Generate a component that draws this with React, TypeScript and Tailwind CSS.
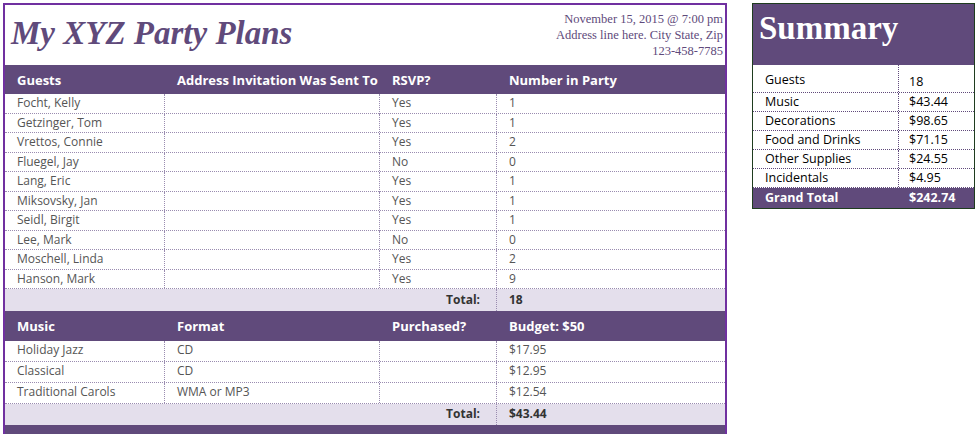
const guests = [
  ["Focht, Kelly", "Yes", "1"],
  ["Getzinger, Tom", "Yes", "1"],
  ["Vrettos, Connie", "Yes", "2"],
  ["Fluegel, Jay", "No", "0"],
  ["Lang, Eric", "Yes", "1"],
  ["Miksovsky, Jan", "Yes", "1"],
  ["Seidl, Birgit", "Yes", "1"],
  ["Lee, Mark", "No", "0"],
  ["Moschell, Linda", "Yes", "2"],
  ["Hanson, Mark", "Yes", "9"],
];

const music = [
  ["Holiday Jazz", "CD", "$17.95"],
  ["Classical", "CD", "$12.95"],
  ["Traditional Carols", "WMA or MP3", "$12.54"],
];

const summary = [
  ["Music", "$43.44"],
  ["Decorations", "$98.65"],
  ["Food and Drinks", "$71.15"],
  ["Other Supplies", "$24.55"],
  ["Incidentals", "$4.95"],
];

const cols = "grid grid-cols-[160px_215px_117px_1fr]";
const cell = "pl-3 border-r border-dotted border-[#9a8cb0]";

const Head = ({ items, h }: { items: string[]; h: string }) => (
  <div className={`${cols} ${h} bg-[#604a7b] text-white font-bold text-[13px] pt-1.5`}>
    {items.map((t, i) => (
      <div key={i} className="pl-3">{t}</div>
    ))}
  </div>
);

const Row = ({ a, b, c, d, h }: { a: string; b: string; c: string; d: string; h: string }) => (
  <div className={`${cols} ${h} border-b border-dotted border-[#9a8cb0] text-[12px] text-[#555] items-end`}>
    <div className={`${cell} h-full flex items-end pb-0.5`}>{a}</div>
    <div className={`${cell} h-full flex items-end pb-0.5`}>{b}</div>
    <div className={`${cell} h-full flex items-end pb-0.5`}>{c}</div>
    <div className="pl-3 h-full flex items-end pb-0.5">{d}</div>
  </div>
);

const Total = ({ v, h }: { v: string; h: string }) => (
  <div className={`${cols} ${h} bg-[#e4dfec] text-[12px] text-[#333] font-bold`}>
    <div className="col-span-3 text-right pr-4 border-r border-dotted border-[#9a8cb0] flex items-end justify-end pb-0.5">Total:</div>
    <div className="pl-3 flex items-end pb-0.5">{v}</div>
  </div>
);

export default function App() {
  return (
    <div className="w-[977px] h-[434px] bg-white flex gap-[25px] pl-[3px] pt-[3px] overflow-hidden" style={{ fontFamily: '"Open Sans", "Liberation Sans", sans-serif' }}>
      <div className="w-[724px] h-[440px] border-x-2 border-t-2 border-[#7030a0] flex flex-col">
        <div className="h-[60px] flex justify-between">
          <h1 className="pl-1.5 pt-3 text-[33px] leading-none italic font-bold text-[#604a7b]" style={{ fontFamily: '"Liberation Serif", serif' }}>
            My XYZ Party Plans
          </h1>
          <div className="text-right text-[12.5px] leading-[16px] text-[#604a7b] pr-0.5 pt-1.5" style={{ fontFamily: '"Liberation Serif", serif' }}>
            <div>November 15, 2015 @ 7:00 pm</div>
            <div>Address line here. City State, Zip</div>
            <div>123-458-7785</div>
          </div>
        </div>
        <Head items={["Guests", "Address Invitation Was Sent To", "RSVP?", "Number in Party"]} h="h-[29px]" />
        {guests.map((g) => (
          <Row key={g[0]} a={g[0]} b="" c={g[1]} d={g[2]} h="h-[19.5px]" />
        ))}
        <Total v="18" h="h-[22px]" />
        <Head items={["Music", "Format", "Purchased?", "Budget: $50"]} h="h-[30px]" />
        {music.map((m) => (
          <Row key={m[0]} a={m[0]} b={m[1]} c="" d={m[2]} h="h-[21px]" />
        ))}
        <Total v="$43.44" h="h-[21px]" />
        <div className="h-[10px] bg-[#604a7b]" />
      </div>
      <div className="w-[223px] h-[206px] border border-[#1f3d1f] self-start flex flex-col">
        <div className="h-[61px] bg-[#604a7b] text-white text-[33px] font-bold pl-1.5 pt-2 leading-none" style={{ fontFamily: '"Liberation Serif", serif' }}>
          Summary
        </div>
        <div className="grid grid-cols-[146px_1fr] h-[28px] border-b border-dotted border-[#604a7b] text-[12.5px] text-black">
          <div className="pl-3 pt-1.5 border-r border-dotted border-[#604a7b]">Guests</div>
          <div className="pl-2.5 pt-2">18</div>
        </div>
        {summary.map((s) => (
          <div key={s[0]} className="grid grid-cols-[146px_1fr] h-[19px] border-b border-dotted border-[#604a7b] text-[12.5px] text-black leading-[18px]">
            <div className="pl-3 border-r border-dotted border-[#604a7b]">{s[0]}</div>
            <div className="pl-2.5">{s[1]}</div>
          </div>
        ))}
        <div className="grid grid-cols-[146px_1fr] flex-1 bg-[#604a7b] text-white font-bold text-[12.5px] items-center">
          <div className="pl-3">Grand Total</div>
          <div className="pl-2.5">$242.74</div>
        </div>
      </div>
    </div>
  );
}
